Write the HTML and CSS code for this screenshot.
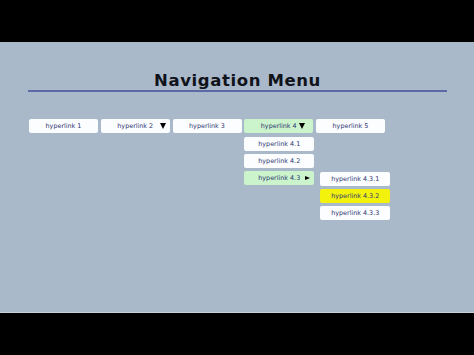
FILE: index.html
```html
<!DOCTYPE html>
<html>
<head>
<meta charset="utf-8">
<link rel="stylesheet" href="styles.css">
</head>
<body>
<div class="bar"></div>
<main class="stage">
  <h1 class="title">Navigation Menu</h1>
  <ul class="menu">
    <li class="item"><a class="link">hyperlink 1</a></li>
    <li class="item"><a class="link has-sub">hyperlink 2<span class="down"></span></a></li>
    <li class="item"><a class="link">hyperlink 3</a></li>
    <li class="item">
      <a class="link has-sub open wide-arrow">hyperlink 4<span class="down"></span></a>
      <ul class="sub">
        <li class="item"><a class="link">hyperlink 4.1</a></li>
        <li class="item"><a class="link">hyperlink 4.2</a></li>
        <li class="item">
          <a class="link has-sub open">hyperlink 4.3<span class="right"></span></a>
          <ul class="sub side">
            <li class="item"><a class="link">hyperlink 4.3.1</a></li>
            <li class="item"><a class="link hover">hyperlink 4.3.2</a></li>
            <li class="item"><a class="link">hyperlink 4.3.3</a></li>
          </ul>
        </li>
      </ul>
    </li>
    <li class="item"><a class="link">hyperlink 5</a></li>
  </ul>
</main>
<div class="bar"></div>
</body>
</html>
```

FILE: styles.css
```css
html, body {
  margin: 0;
  padding: 0;
  background: #000;
  width: 474px;
  height: 355px;
  overflow: hidden;
}
.bar {
  height: 42px;
  background: #000;
}
.stage {
  height: 270px;
  background: #aab9ca;
  border-bottom: 1px solid #c9d1dc;
  font-family: "DejaVu Sans", Verdana, sans-serif;
}
.title {
  margin: 0 27px 0 28px;
  padding-top: 30px;
  line-height: 18px;
  height: 18px;
  font-size: 16.5px;
  letter-spacing: 0.6px;
  font-weight: bold;
  text-align: center;
  color: #10131a;
  border-bottom: 2px solid #5b6aa6;
}
.menu {
  list-style: none;
  margin: 27px 0 0 29px;
  padding: 0;
  display: flex;
  gap: 2.75px;
}
.item {
  position: relative;
  list-style: none;
}
.link {
  position: relative;
  display: block;
  width: 69px;
  height: 14px;
  line-height: 14px;
  box-sizing: border-box;
  background: #fcfdfe;
  border-radius: 2px;
  text-align: center;
  font-size: 6.4px;
  color: #2e3672;
}
.link.open {
  background: #cbf3cc;
}
.link.hover {
  background: #f3f20c;
}
.sub {
  position: absolute;
  left: 0;
  top: 18px;
  margin: 0;
  padding: 0;
  display: flex;
  flex-direction: column;
  gap: 3px;
}
.sub .link {
  width: 70px;
}
.sub.side {
  left: 76px;
  top: 1px;
}
.down {
  position: absolute;
  right: 4px;
  top: 4px;
  width: 0;
  height: 0;
  border-left: 3px solid transparent;
  border-right: 3px solid transparent;
  border-top: 6px solid #000;
}
.wide-arrow .down {
  right: 8px;
}
.right {
  position: absolute;
  right: 4px;
  top: 4.5px;
  width: 0;
  height: 0;
  border-top: 2.5px solid transparent;
  border-bottom: 2.5px solid transparent;
  border-left: 5px solid #000;
}
```
